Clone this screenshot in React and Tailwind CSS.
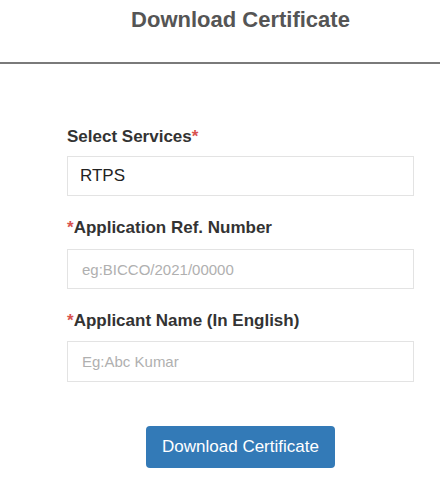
export default function App() {
  return (
    <div
      className="w-[440px] h-[478px] bg-white overflow-hidden"
      style={{ fontFamily: '"Liberation Sans", Arial, sans-serif' }}
    >
      <div className="h-[64px] flex justify-center pt-[6px] pl-[41px] border-b-2 border-[#7a7a7a]">
        <h2 className="text-[22px] leading-[28px] font-bold text-[#555]">Download Certificate</h2>
      </div>

      <form className="pl-[67px] pr-[26px] pt-[63px] flex flex-col">
        <label className="text-[17px] font-bold text-[#333] leading-[20px]">
          Select Services<span className="text-[#d9534f]">*</span>
        </label>
        <div className="mt-[9px] h-[40px] border border-[#e3e3e3] flex items-center px-[12px] text-[17px] text-[#222]">
          RTPS
        </div>

        <label className="mt-[22px] text-[17px] font-bold text-[#333] leading-[20px]">
          <span className="text-[#d9534f]">*</span>Application Ref. Number
        </label>
        <input
          className="mt-[11px] h-[40px] border border-[#e3e3e3] px-[14px] text-[15px] placeholder:text-[#b0b0b0] outline-none"
          placeholder="eg:BICCO/2021/00000"
        />

        <label className="mt-[22px] text-[17px] font-bold text-[#333] leading-[20px]">
          <span className="text-[#d9534f]">*</span>Applicant Name (In English)
        </label>
        <input
          className="mt-[10px] h-[41px] border border-[#e3e3e3] px-[14px] text-[15px] placeholder:text-[#b0b0b0] outline-none"
          placeholder="Eg:Abc Kumar"
        />

        <div className="flex justify-center mt-[44px]">
          <button
            type="button"
            className="h-[42px] px-[16px] rounded-[4px] bg-[#337ab7] text-white text-[17px]"
          >
            Download Certificate
          </button>
        </div>
      </form>
    </div>
  );
}
